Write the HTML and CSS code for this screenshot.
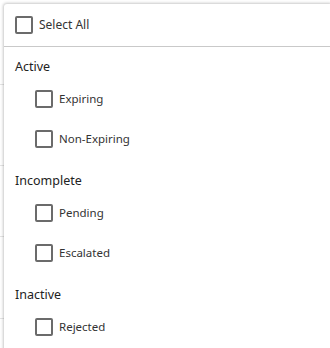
FILE: index.html
```html
<!DOCTYPE html>
<html lang="en">
<head>
<meta charset="utf-8">
<title>Status filter</title>
<link rel="stylesheet" href="styles.css">
</head>
<body>
<div class="backdrop">
  <div class="panel">
    <label class="select-all">
      <span class="box"></span>
      <span class="label">Select All</span>
    </label>
    <div class="groups">
      <div class="group">
        <div class="group-title">Active</div>
        <label class="item"><span class="box"></span><span class="label">Expiring</span></label>
        <label class="item"><span class="box"></span><span class="label">Non-Expiring</span></label>
      </div>
      <div class="group">
        <div class="group-title">Incomplete</div>
        <label class="item"><span class="box"></span><span class="label">Pending</span></label>
        <label class="item"><span class="box"></span><span class="label">Escalated</span></label>
      </div>
      <div class="group">
        <div class="group-title">Inactive</div>
        <label class="item"><span class="box"></span><span class="label">Rejected</span></label>
      </div>
    </div>
  </div>
</div>
</body>
</html>
```

FILE: styles.css
```css
html, body {
  margin: 0;
  padding: 0;
}
body {
  width: 330px;
  height: 348px;
  overflow: hidden;
  font-family: "Noto Sans", "Open Sans", sans-serif;
  color: #333;
  background:
    linear-gradient(#e4e4e4, #e4e4e4) 0 84px / 4px 1px no-repeat,
    linear-gradient(#e4e4e4, #e4e4e4) 0 165px / 4px 1px no-repeat,
    linear-gradient(#e4e4e4, #e4e4e4) 0 236px / 4px 1px no-repeat,
    linear-gradient(#e4e4e4, #e4e4e4) 0 318px / 4px 1px no-repeat,
    #fff;
}
.backdrop {
  padding: 4px 0 0 4px;
  height: 344px;
}
.panel {
  height: 350px;
  background: #fff;
  border-top-left-radius: 3px;
  box-shadow: 0 0 3px 1px rgba(0, 0, 0, 0.22);
}
.select-all {
  display: flex;
  align-items: center;
  gap: 6px;
  height: 42px;
  padding-left: 11px;
  border-bottom: 1px solid #c9c9c9;
  font-size: 12px;
}
.box {
  box-sizing: border-box;
  width: 18px;
  height: 18px;
  border: 2px solid #6b6b6b;
  border-radius: 2px;
  flex: none;
}
.groups {
  padding-top: 8px;
}
.group + .group {
  margin-top: 10px;
}
.group-title {
  height: 24px;
  line-height: 24px;
  padding-left: 11px;
  font-size: 12.5px;
  color: #222;
}
.item {
  display: flex;
  align-items: center;
  gap: 6px;
  height: 40px;
  padding-left: 31px;
  font-size: 11.5px;
}
.label {
  line-height: 1;
}
```
